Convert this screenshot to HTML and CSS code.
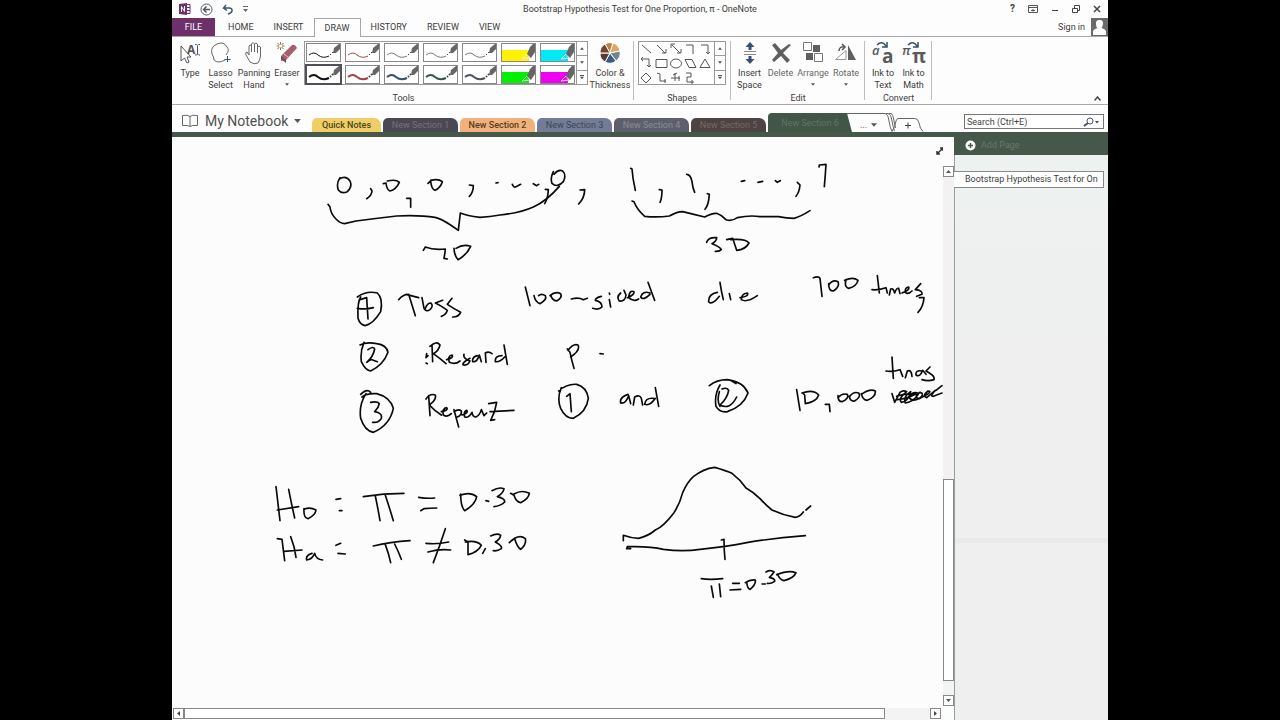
FILE: index.html
```html
<!DOCTYPE html>
<html lang="en">
<head>
<meta charset="utf-8">
<title>Bootstrap Hypothesis Test for One Proportion, π - OneNote</title>
<link rel="stylesheet" href="styles.css">
</head>
<body>
<svg class="defs" aria-hidden="true">
  <symbol id="pen" viewBox="0 0 33 17">
    <path d="M2 11Q7 7 11 11Q16 15 22 12" fill="none" stroke="currentColor"/>
    <path d="M23 11l1-1M25 9l1-1" stroke="#444" fill="none"/>
    <path d="M26 9L27 4L32 0H33V5L29 9Z" fill="#666" stroke="none"/>
  </symbol>
  <symbol id="marker" viewBox="0 0 33 17">
    <path d="M0 6H27V17H0Z" fill="currentColor"/>
    <path d="M20 15L25 10L28 14Z" fill="none" stroke="#eee"/>
    <path d="M25 10L28 3L31 0H33V8L29 14Z" fill="#666"/>
  </symbol>
  <symbol id="up" viewBox="0 0 5 3"><path d="M0 3L2.500 0L5 3Z" fill="#555"/></symbol>
  <symbol id="down" viewBox="0 0 5 3"><path d="M0 0L2.500 3L5 0Z" fill="#555"/></symbol>
</svg>
<div class="app">
  <header class="titlebar">
    <div class="quick">
      <svg width="12" height="12" viewBox="0 0 12 12"><path d="M0 1L8 0V12L0 11Z" fill="#6d3069"/><path d="M8 1.500H11V10.500H8M8 4.500H11M8 7.500H11" fill="none" stroke="#6d3069"/><path d="M2.500 9V3.500L5.500 8.500V3" fill="none" stroke="#fff"/></svg>
      <button aria-label="Back"><svg width="13" height="13" viewBox="0 0 13 13" fill="none" stroke="#4d5a66"><circle cx="6.500" cy="6.500" r="5.500"/><path d="M10 6.500H4M6.500 3.500L3.500 6.500L6.500 9.500" stroke-width="1.500"/></svg></button>
      <button aria-label="Undo"><svg width="12" height="11" viewBox="0 0 12 11" fill="none" stroke="#3f5570" stroke-width="1.500"><path d="M4 1L1.500 4L5 6.500M2 4H7Q10.500 4 10 7Q9.500 9 6 10"/></svg></button>
      <button aria-label="Customize"><svg width="5" height="6" viewBox="0 0 5 6"><path d="M0 .5H5" stroke="#666"/><path d="M0 3H5L2.500 6Z" fill="#666"/></svg></button>
    </div>
    <h1>Bootstrap Hypothesis Test for One Proportion, π - OneNote</h1>
    <div class="winctl">
      <button class="help" aria-label="Help">?</button>
      <button aria-label="Ribbon display"><svg width="10" height="8" viewBox="0 0 10 8" fill="none" stroke="#555"><path d="M.5 .5H9.500V7.500H.5ZM1 2.500H9M5 6.500V4M3 5.500H7"/></svg></button>
      <button aria-label="Minimize"><svg width="8" height="8" viewBox="0 0 8 8"><path d="M1 5.500H7" stroke="#444"/></svg></button>
      <button aria-label="Restore"><svg width="8" height="8" viewBox="0 0 8 8" fill="none" stroke="#444"><path d="M.5 3.500H5.500V7.500H.5ZM2.500 3V.5H7.500V5.500H6"/></svg></button>
      <button aria-label="Close"><svg width="8" height="8" viewBox="0 0 8 8"><path d="M1 1L7 7M7 1L1 7" stroke="#444" stroke-width="1.500"/></svg></button>
    </div>
  </header>

  <nav class="tabs">
    <button class="file">FILE</button>
    <button>HOME</button>
    <button>INSERT</button>
    <button class="active">DRAW</button>
    <button>HISTORY</button>
    <button>REVIEW</button>
    <button>VIEW</button>
    <a class="signin" href="#">Sign in</a>
    <svg width="17" height="18" viewBox="0 0 17 18"><path d="M0 0H17V18H0Z" fill="#6a6a6a"/><path d="M8.500 2Q12.500 2 12 6Q11.500 9 10.500 10Q14 11 15 13V17H2V13Q3 11 6.500 10Q5 9 5 6Q4.500 2 8.500 2Z" fill="#fff"/></svg>
  </nav>

  <div class="ribbon">
    <section class="group">
      <div class="items">
        <button class="tool w30"><svg width="24" height="24" viewBox="0 0 24 24" fill="none" stroke="#555"><path d="M3 5V20L6.500 17L9 22L11 21L9 16H13Z"/><path d="M17 3.500H18.500L19.500 4.500L20.500 3.500H22M19.500 4.500V13L18.500 14H17M19.500 13L20.500 14H22"/><text x="9" y="13" class="glyph">A</text></svg>Type</button>
        <button class="tool w31"><svg width="24" height="24" viewBox="0 0 24 24" fill="none" stroke="#666"><path d="M16 19Q9 23 5 19Q5 16 3 13Q1 6 8 3Q15 0 18 6Q21 9 17 14"/><path d="M18.500 15V21M15.500 18.500H21.500" stroke="#36526e"/></svg>Lasso<br>Select</button>
        <button class="tool w36"><svg width="24" height="24" viewBox="0 0 24 24" fill="none" stroke="#666"><path d="M8 21Q6 17 4 14Q3 11 5 11L7 14V5Q8 3 9.500 5V11V3Q11 0 12.500 3V11V3Q14 1 15.500 3V12V6Q17 4 18.500 6V15Q18 19 16 22Q12 24 8 21Z"/></svg>Panning<br>Hand</button>
        <button class="tool w30"><svg width="24" height="24" viewBox="0 0 24 24"><path d="M6 15L17 4Q20 3 22 7L11 19L6 20Z" fill="#a2606c"/><path d="M6 15L11 19V22L6 18Z" fill="#7b4650"/><path d="M9 13L14 17" stroke="#e6bcc2"/><path d="M5.500 1V9M1.500 5H9.500M2.500 2L8.500 8M8.500 2L2.500 8" stroke="#8c7130"/><circle cx="5.500" cy="5" r="1.500" fill="#fff"/></svg>Eraser<svg class="caret" width="4" height="3"><use href="#down"/></svg></button>
        <div class="gallery">
          <div class="pens">
            <button class="thin c-black" aria-label="Black pen"><svg><use href="#pen"/></svg></button>
            <button class="thin c-red" aria-label="Red pen"><svg><use href="#pen"/></svg></button>
            <button class="thin c-gray" aria-label="Blue pen"><svg><use href="#pen"/></svg></button>
            <button class="thin c-gray" aria-label="Green pen"><svg><use href="#pen"/></svg></button>
            <button class="thin c-gray" aria-label="Gray pen"><svg><use href="#pen"/></svg></button>
            <button class="c-yellow" aria-label="Yellow highlighter"><svg><use href="#marker"/></svg></button>
            <button class="c-cyan" aria-label="Cyan highlighter"><svg><use href="#marker"/></svg></button>
            <button class="thick c-black picked" aria-label="Thick black pen"><svg><use href="#pen"/></svg></button>
            <button class="thick c-red" aria-label="Thick red pen"><svg><use href="#pen"/></svg></button>
            <button class="thick c-blue" aria-label="Thick blue pen"><svg><use href="#pen"/></svg></button>
            <button class="thick c-green" aria-label="Thick green pen"><svg><use href="#pen"/></svg></button>
            <button class="thick c-slate" aria-label="Thick gray pen"><svg><use href="#pen"/></svg></button>
            <button class="c-lime" aria-label="Green highlighter"><svg><use href="#marker"/></svg></button>
            <button class="c-pink" aria-label="Pink highlighter"><svg><use href="#marker"/></svg></button>
          </div>
          <div class="steps">
            <button aria-label="Previous pens"><svg width="4" height="3"><use href="#up"/></svg></button>
            <button aria-label="Next pens"><svg width="4" height="3"><use href="#down"/></svg></button>
            <button class="more" aria-label="More pens"><svg width="4" height="3"><use href="#down"/></svg></button>
          </div>
        </div>
        <button class="tool w44"><svg width="24" height="24" viewBox="-12 -12 24 24" stroke="#fff"><path d="M0 0L-5 -9A10 10 0 0 1 3 -10Z" fill="#b98045"/><path d="M0 0L3 -10A10 10 0 0 1 10 -2Z" fill="#e0a560"/><path d="M0 0L10 -2A10 10 0 0 1 6 8Z" fill="#71868a"/><path d="M0 0L6 8A10 10 0 0 1 -5 9Z" fill="#3d5c86"/><path d="M0 0L-5 9A10 10 0 0 1 -10 0Z" fill="#5b3b3a"/><path d="M0 0L-10 0A10 10 0 0 1 -5 -9Z" fill="#7b4030"/></svg>Color &amp;<br>Thickness</button>
      </div>
      <h2>Tools</h2>
    </section>
    <section class="group">
      <div class="items">
        <div class="gallery">
          <svg class="shapes" width="75" height="42" viewBox="0 0 75 42" fill="none" stroke="#555">
            <path d="M3 3L12 11M18 3L26 11M23 11H27V7M33 3L41 11M32 6V2H36M38 11H42V7M47 3H54V12M62 3H69V12M67 10L69 12L71 10"/>
            <path d="M2 17H10V25M4 15L2 17L4 19M8 23L10 25L12 23M17 17.500H28V25.500H17ZM46 17.500H53L57 25.500H50ZM61 25.500L66 17L71 25.500Z"/><ellipse cx="37" cy="21.500" rx="5.500" ry="4.500"/>
            <path d="M2 36L7 31L12 36L7 41ZM18 31L21 32V39H27M26 37V41M32 36H41M36 31V39M40 34V39M34 33L38 31M47 31H52V35H48V40H55M53 38V42"/>
          </svg>
          <div class="steps">
            <button aria-label="Previous shapes"><svg width="4" height="3"><use href="#up"/></svg></button>
            <button aria-label="Next shapes"><svg width="4" height="3"><use href="#down"/></svg></button>
            <button class="more" aria-label="More shapes"><svg width="4" height="3"><use href="#down"/></svg></button>
          </div>
        </div>
      </div>
      <h2>Shapes</h2>
    </section>
    <section class="group">
      <div class="items">
        <button class="tool w31"><svg width="24" height="24" viewBox="0 0 24 24"><path d="M6 10.500H18M6 13.500H18" stroke="#888"/><path d="M12 1L16.500 6H13.500V9H10.500V6H7.500ZM12 23L16.500 18H13.500V15H10.500V18H7.500Z" fill="#34506e"/></svg>Insert<br>Space</button>
        <button class="tool w31 dim"><svg width="24" height="24" viewBox="0 0 24 24"><path d="M3 4L6 2L12 9L20 3L22 4L14 12L21 19L18 22L12 15L5 21L3 19L9 12Z" fill="#5f5f5f"/></svg>Delete</button>
        <button class="tool w34 dim"><svg width="24" height="24" viewBox="0 0 24 24"><path d="M12 4H19V11H12ZM5 12H12V19H5Z" fill="#5f5f5f"/><path d="M2.500 1.500H10.500V9.500H2.500ZM13.500 12.500H21.500V20.500H13.500Z" fill="#fff" stroke="#777"/></svg>Arrange<svg class="caret" width="4" height="3"><use href="#down"/></svg></button>
        <button class="tool w32 dim"><svg width="24" height="24" viewBox="0 0 24 24"><path d="M14 4L22 19H14Z" fill="#5f5f5f"/><path d="M1.500 18.500H12V9.500Z" fill="#fff" stroke="#999"/><path d="M5 10Q5 5 11 6M8 3L11 6L8 9" fill="none" stroke="#555" stroke-width="1.500"/></svg>Rotate<svg class="caret" width="4" height="3"><use href="#down"/></svg></button>
      </div>
      <h2>Edit</h2>
    </section>
    <section class="group">
      <div class="items">
        <button class="tool w30"><svg width="24" height="24" viewBox="0 0 24 24"><text x="1" y="14" class="glyph-i">a</text><text x="11" y="22" class="glyph-b">a</text><path d="M6 4Q11 -1 15 5M16 1V6H11" fill="none" stroke="#34506e" stroke-width="1.500"/></svg>Ink to<br>Text</button>
        <button class="tool w31"><svg width="24" height="24" viewBox="0 0 24 24"><text x="0" y="14" class="glyph-i">π</text><text x="10" y="22" class="glyph-b">π</text><path d="M6 4Q11 -1 15 5M16 1V6H11" fill="none" stroke="#34506e" stroke-width="1.500"/></svg>Ink to<br>Math</button>
      </div>
      <h2>Convert</h2>
    </section>
    <button class="collapse" aria-label="Collapse the ribbon"><svg width="7" height="5" viewBox="0 0 7 5"><path d="M.5 4.500L3.500 1L6.500 4.500" fill="none" stroke="#444" stroke-width="1.500"/></svg></button>
  </div>

  <div class="sections">
    <button class="notebook"><svg width="18" height="14" viewBox="0 0 18 14" fill="none" stroke="#666"><path d="M9 2.500Q7 .5 1.500 1.500V11.500Q7 11 9 12.500Q11 11 16.500 11.500V1.500Q11 .5 9 2.500V12"/></svg><span>My Notebook</span><svg width="7" height="4"><use href="#down"/></svg></button>
    <div class="strip">
      <button class="s-yellow">Quick Notes</button>
      <button class="s-ink">New Section 1</button>
      <button class="s-orange">New Section 2</button>
      <button class="s-blue">New Section 3</button>
      <button class="s-slate">New Section 4</button>
      <button class="s-brown">New Section 5</button>
      <button class="s-green">New Section 6</button>
    </div>
    <button class="overflow">... <svg width="6" height="4"><use href="#down"/></svg></button>
    <svg class="stack" width="14" height="19" viewBox="0 0 14 19" fill="none" stroke="#666"><path d="M0 .5H1Q4 1 5 8Q6 15 8 18.500M2 .5H4Q7 1 8 8Q9 14 10.500 18M5 .5H7Q9 1 10 8L11.500 15M8 18.500Q11 14 12 8Q13 5.500 14 5.500"/></svg>
    <button class="add" aria-label="New section"><svg width="28" height="14" viewBox="0 0 28 14" fill="none" stroke="#666"><path d="M0 .5H17Q20 .5 21 5Q22 11 25 13.500"/><path d="M7 7.500H13M10 4.500V10.500" stroke="#444"/></svg></button>
    <label class="search"><input type="text" placeholder="Search (Ctrl+E)" aria-label="Search"><svg width="20" height="10" viewBox="0 0 20 10" fill="none" stroke="#456"><circle cx="9" cy="4" r="3"/><path d="M7 6L3 9" stroke-width="2"/><path d="M14 4H18L16 6.500Z" fill="#444" stroke="none"/></svg></label>
  </div>

  <main class="workspace">
    <div class="page">
      <div class="canvas">
        <svg class="ink" width="771" height="570" viewBox="172 137 771 570" role="img" aria-label="Handwritten notes">
          <g transform="translate(320 155) scale(.33333)">
            <path d="M60 68Q48 85 55 105Q65 118 82 110Q98 95 90 78Q78 60 58 72M152 101L156 108Q155 122 140 131M190 86L198 84Q200 104 210 108Q228 104 238 82Q228 72 202 78M260 130L272 130L272 157M324 85L332 78Q334 102 345 106Q362 98 367 80Q355 70 332 76M448 90L460 92Q460 112 448 124M528 84L534 83M577 88Q582 100 588 95L602 88M640 86L650 92L656 88M676 103L685 104Q684 130 674 146M700 50Q690 70 696 85Q712 100 730 80Q740 60 728 48Q715 42 702 58M780 105L794 104Q794 128 776 147"/>
            <path d="M24 148L30 156Q32 176 48 192Q60 205 74 206L108 198Q170 190 230 183Q300 180 345 187Q365 190 415 226L421 174Q440 182 480 187Q510 186 540 180Q600 174 640 156Q680 138 718 94"/>
            <path d="M310 286L316 276Q340 286 376 282Q374 300 372 310L382 312M402 280Q402 300 414 314Q440 300 452 274Q430 266 408 280"/>
          </g>
          <g transform="translate(600 155) scale(.33333)">
            <path d="M92 40L96 42Q98 70 106 106M178 104L186 105Q186 130 180 142M260 58Q272 58 276 80Q278 100 284 112M322 116L328 118Q326 150 315 163M424 79L434 77M474 82L488 79M526 77L532 82L541 77M592 82L600 90Q598 112 588 124M657 36L658 30L678 28Q676 60 673 95"/>
            <path d="M96 138L102 140Q110 162 134 184Q170 188 208 183Q232 170 248 170Q280 178 314 186Q335 174 350 175Q365 180 378 194Q395 200 412 188Q450 180 480 185L535 185Q560 190 582 190Q600 186 630 167"/>
            <path d="M320 262Q325 246 350 248Q350 258 336 266Q362 276 364 284Q358 290 346 289M380 254L398 250L410 286Q436 284 447 264Q436 250 392 254"/>
          </g>
          <g transform="translate(340 265) scale(.33333)">
            <path d="M62 96Q52 110 54 160Q60 180 76 182Q100 176 122 140Q130 100 112 84Q80 76 52 96M60 104L80 98L84 162M52 130Q80 134 100 128M176 104Q188 88 206 88L226 152M198 88Q214 92 236 98M246 98L252 130Q258 142 270 134Q282 122 272 114Q262 114 256 130M308 106L286 114Q300 120 322 136Q318 150 304 154M336 100L322 118Q340 130 362 142Q356 156 338 156"/>
            <path d="M556 66L570 122M582 92Q586 112 600 116Q622 104 616 92Q604 84 596 92M632 90Q636 106 650 108Q668 98 662 86Q646 78 630 92M694 102Q716 96 730 104L742 100M784 94Q766 98 766 106Q786 110 786 126Q776 136 758 130M808 104L812 126M808 84L809 88M842 84Q828 96 838 108Q856 110 858 90L852 76M862 98Q884 90 882 80Q868 74 866 98Q880 112 896 102M930 84Q908 76 902 96Q910 108 930 88M924 52Q934 80 944 106"/>
            <path d="M72 232Q60 260 64 290Q76 316 92 318Q130 300 144 262Q140 240 110 236Q80 230 60 240M84 254Q100 242 104 252Q100 275 80 292Q90 282 96 284L112 290M258 294L262 296M260 266L258 278L264 272M276 240L278 290M270 244Q290 226 300 240Q296 258 280 266Q300 280 318 296M320 284Q342 278 336 270Q322 272 328 292Q346 300 360 288M372 268Q368 280 390 288Q384 302 370 300Q364 294 390 280M412 272Q396 276 398 290Q412 292 418 270L424 290M438 292L436 264Q446 258 456 266M486 272Q464 272 466 290Q480 292 494 276M492 240L502 298M682 252L690 262Q696 290 702 310M684 256Q700 234 714 240Q722 256 692 276M780 266L790 267"/>
            <path d="M78 386Q56 420 62 460Q74 498 100 502Q150 480 160 430Q150 396 110 386Q80 384 66 396M62 388Q80 370 92 382M92 412Q112 408 118 416Q116 428 104 440Q128 444 124 460Q116 474 98 472M266 392L270 452M258 402Q270 384 286 390Q290 404 268 420Q282 436 304 450M304 440Q326 436 320 428Q306 430 310 450Q322 458 334 446M342 434L356 486M342 440Q356 430 364 438Q366 450 352 456M366 450Q386 444 380 436Q370 440 374 456Q386 460 396 442Q398 456 408 456Q420 450 424 434L432 452L440 444M446 416L470 412Q466 440 452 466L464 464M450 440L522 436M664 368Q650 400 662 430Q676 460 700 460Q740 440 745 400Q740 366 710 358Q680 356 656 378M680 394L690 386L694 440M864 388Q838 396 842 414Q858 416 866 392L872 416M880 420L884 396Q900 388 904 400L908 420M940 400Q916 398 914 418Q930 424 946 400M946 368L956 424"/>
          </g>
          <g transform="translate(640 265) scale(.33333)">
            <path d="M232 82Q204 88 206 110Q216 122 238 94M240 52Q244 80 250 104M268 86L272 104M300 98Q328 94 322 84Q304 86 304 104Q320 114 352 92M520 38Q536 32 540 40L546 94M566 56Q566 78 580 78Q600 66 594 50Q578 42 566 60M618 44Q612 66 626 70Q650 64 654 46Q640 34 614 46M712 32L718 84M696 74Q714 76 738 68L742 84M748 90L752 72Q760 68 764 84Q770 68 776 70L780 86M786 84Q810 76 806 66Q794 68 796 82Q804 90 816 78M842 56L826 74Q848 76 846 88L830 94M838 98L852 98Q850 126 834 142"/>
            <path d="M756 276L760 340M738 318Q756 322 780 314L788 334M796 338L802 318Q814 312 816 334M846 318Q826 314 828 330Q840 338 848 316L858 328M870 306L858 318Q886 332 882 344Q864 350 846 344M240 360Q222 390 228 424Q240 444 262 440Q310 424 324 384Q310 350 262 344Q230 344 208 362M272 346L288 356M246 372Q262 366 266 376Q262 400 240 420Q270 436 290 396M238 380Q230 408 240 424M470 374L480 436M488 384L494 390L496 416Q530 410 536 390Q520 372 486 384M556 418L568 418L570 440M594 392Q594 410 606 410Q628 400 622 388Q606 384 594 398M628 394Q630 410 644 408Q664 396 656 384Q640 378 628 396M664 386Q668 406 682 406Q708 396 706 378Q690 370 664 388"/>
            <path d="M756 386L764 412L780 382Q790 374 800 380Q774 400 784 412Q804 410 812 380Q788 396 796 414Q822 410 836 386Q820 376 806 396Q816 412 838 400Q856 386 840 382Q820 394 836 402L862 388Q876 378 864 378Q846 392 860 398L886 376Q868 394 880 394L906 384M770 394Q800 384 826 388Q800 402 772 404M888 376L906 362"/>
          </g>
          <g transform="translate(260 470) scale(.33333)">
            <path d="M48 50Q54 100 60 152M86 58Q94 100 104 144M52 120L116 110M132 116Q130 144 144 146Q166 136 168 120Q150 110 132 118M228 88L242 86M238 122L246 122M310 80Q370 70 432 70M346 78Q354 116 360 152M376 76Q388 112 400 152M476 82Q500 86 524 84M482 122L492 116Q510 114 530 114M602 72Q602 110 614 122Q646 104 650 80Q630 64 600 76M678 92L686 94M696 62Q716 50 732 56Q730 70 712 80Q736 86 734 96Q722 108 702 110M752 70L762 76Q768 96 782 98Q806 86 808 70Q786 58 762 72"/>
            <path d="M52 206L66 208Q70 240 74 272M92 200Q104 230 108 262M72 244L126 240M156 250Q136 256 140 270Q158 268 164 250Q168 268 188 270M228 226L242 220M234 250L256 252M340 228Q390 216 450 212M376 224Q386 250 392 278M404 222Q416 246 424 268M556 176Q540 226 520 278M498 220Q530 224 566 216M504 246Q540 236 572 240M614 210L624 216L624 254Q654 246 664 226Q650 210 616 216M676 236L668 250M692 198Q712 188 722 196Q720 208 706 216Q728 228 724 236Q712 244 700 242M752 214L764 206Q772 232 782 238Q800 224 796 206Q776 190 748 218"/>
          </g>
          <g transform="translate(600 450) scale(.33333)">
            <path d="M70 272L70 256Q90 264 116 265Q145 258 166 240Q190 230 222 188Q240 160 248 128Q262 96 280 80Q310 56 344 52Q380 62 396 70Q420 88 438 114Q460 126 480 146Q500 168 516 180Q550 196 586 202Q600 200 610 186M618 180L632 168M82 290L80 296L92 296M82 290Q150 288 190 298Q250 306 300 298Q380 290 440 278Q520 264 616 257M364 270L372 268Q372 300 375 328"/>
            <path d="M304 386Q330 390 368 386M334 408L340 442M358 402L362 440M398 400L418 400M390 420L422 418M440 396Q442 416 450 418Q468 404 466 390Q450 388 436 398M486 402L496 402M498 366Q512 358 522 366Q514 378 508 382Q526 386 524 394Q512 402 502 400M532 372Q540 390 552 392Q582 384 588 368Q566 360 530 374"/>
          </g>
        </svg>
        <button class="expand" aria-label="Full page view"><svg width="8" height="8" viewBox="0 0 8 8" fill="none" stroke="#333" stroke-width="1.500"><path d="M1 7L7 1M4 1H7V4M1 4V7H4"/></svg></button>
      </div>
      <div class="hscroll">
        <button aria-label="Scroll left"><svg width="3" height="5" viewBox="0 0 3 5"><path d="M3 0V5L0 2.500Z" fill="#444"/></svg></button>
        <div class="hthumb"></div><div class="hrest"></div>
        <button aria-label="Scroll right"><svg width="3" height="5" viewBox="0 0 3 5"><path d="M0 0V5L3 2.500Z" fill="#444"/></svg></button>
      </div>
    </div>
    <div class="vscroll">
      <button aria-label="Scroll up"><svg width="5" height="3"><use href="#up"/></svg></button>
      <div class="vbefore"></div><div class="vthumb"></div><div class="vafter"></div>
      <button aria-label="Scroll down"><svg width="5" height="3"><use href="#down"/></svg></button>
    </div>
    <aside class="pages">
      <button class="addpage"><svg width="11" height="11" viewBox="0 0 11 11"><circle cx="5.500" cy="5.500" r="5" fill="#fff"/><path d="M5.500 3V8M3 5.500H8" stroke="#46584a" stroke-width="1.500"/></svg>Add Page</button>
      <a class="entry" href="#">Bootstrap Hypothesis Test for On</a>
      <div class="fill"></div>
      <div class="band"></div>
      <div class="rest"></div>
    </aside>
  </main>
</div>
</body>
</html>
```
FILE: styles.css
```css
* { box-sizing: border-box; }
body { margin: 0; background: #000; color: #3c3c3c; font: 9px/12px Roboto, "Open Sans", sans-serif; }
button { margin: 0; padding: 0; border: 0; background: none; color: inherit; font: inherit; }
svg { display: block; flex: none; }
h1, h2 { margin: 0; font: inherit; }
a { color: inherit; text-decoration: none; }
.defs { position: absolute; width: 0; height: 0; }

.app { display: flex; flex-direction: column; min-height: 100vh; margin: 0 172px; background: #fdfdfd; overflow: hidden; }

.titlebar { display: grid; grid-template-columns: 1fr auto 1fr; align-items: center; height: 18px; padding: 0 7px; }
.quick { display: flex; align-items: center; gap: 9px; }
.winctl { display: flex; align-items: center; justify-content: flex-end; gap: 13px; }
.help { font-weight: 700; font-size: 10px; }

.tabs { display: flex; height: 19px; border-bottom: 1px solid #a8a8a8; }
.tabs button { padding: 0 10px; }
.tabs .file { width: 43px; margin-right: 3px; background: #6d3069; color: #fff; }
.tabs .active { height: 19px; border: 1px solid #a8a8a8; border-bottom: 0; background: #fdfdfd; }
.signin { margin-left: auto; margin-right: 6px; line-height: 18px; }

.ribbon { display: flex; height: 68px; border-bottom: 1px solid #a8a8a8; }
.group { display: flex; flex-direction: column; padding: 4px 3px 0; background: linear-gradient(#bdbdbd, #bdbdbd) right 4px / 1px 59px no-repeat; }
.group:nth-child(1) { padding-right: 2px; }
.group:nth-child(2) { padding: 4px 5px 0 4px; }
.group h2 { margin-top: auto; text-align: center; }
.items { display: flex; align-items: flex-start; }
.tool { display: flex; flex-direction: column; align-items: center; line-height: 12px; white-space: nowrap; }
.tool svg { margin-bottom: 2px; overflow: visible; }
.tool .caret { margin: 4px 0 0; }
.dim { color: #666; }
.w30 { width: 30px; }
.w31 { width: 31px; }
.w32 { width: 32px; }
.w34 { width: 34px; }
.w36 { width: 36px; }
.w44 { width: 44px; }
.collapse { margin: auto 7px 3px auto; }
.glyph { font: 700 12px "Open Sans", sans-serif; fill: #555; stroke: none; }
.glyph-i { font: italic 600 13px "Open Sans", sans-serif; fill: #5a5a5a; }
.glyph-b { font: 700 19px "Open Sans", sans-serif; fill: #5a5a5a; }

.gallery { display: flex; border: 1px solid #999; height: 44px; background: #fff; }
.tool + .gallery { margin-left: 2px; }
.pens { display: grid; grid-template-columns: repeat(7, 35px); gap: 3px 4px; padding: 1px; }
.pens button { height: 19px; border: 1px solid #888; }
.pens svg { width: 33px; height: 17px; }
.pens .picked { outline: 2px solid #50505a; outline-offset: -1px; }
.thin { stroke-width: 1px; }
.thick { stroke-width: 2px; }
.c-black { color: #111; }
.c-red { color: #a3434c; }
.c-gray { color: #777; }
.c-blue { color: #34506e; }
.c-green { color: #2f5a4c; }
.c-slate { color: #4a5560; }
.c-yellow { color: #fff200; }
.c-cyan { color: #00eaf5; }
.c-lime { color: #00f000; }
.c-pink { color: #f000f0; }
.steps { display: flex; flex-direction: column; width: 11px; border-left: 1px solid #999; }
.steps button { display: flex; flex: 1; align-items: center; justify-content: center; }
.steps button + button { border-top: 1px solid #999; }
.more svg { border-top: 1px solid #555; height: 5px; }

.sections { display: flex; align-items: flex-end; height: 27px; padding-right: 4px; }
.notebook { display: flex; align-items: center; gap: 6px; width: 140px; height: 22px; padding-left: 9px; font-size: 14px; color: #505050; }
.notebook span { white-space: nowrap; }
.strip { display: flex; align-items: flex-end; gap: 2px; }
.strip button { width: 75px; height: 14px; border-radius: 5px 7px 0 0; line-height: 14px; white-space: nowrap; overflow: hidden; }
.strip .s-yellow { width: 69px; background: #efce68; color: #4f4520; font-weight: 500; }
.s-ink { background: #4b4852; color: #77717c; }
.strip .s-orange { background: #f0b17c; color: #5a3c22; font-weight: 500; }
.s-blue { background: #737c96; color: #3c4458; }
.s-slate { background: #5d606c; color: #8a8c96; }
.s-brown { background: #4d4342; color: #766a64; }
.strip .s-green { width: 84px; height: 19px; line-height: 20px; background: #415646; color: #61755f; border-radius: 4px 0 0 0; clip-path: polygon(0 0, 94% 0, 100% 100%, 0 100%); }
.overflow { display: flex; align-items: center; gap: 4px; height: 19px; width: 37px; margin-left: -5px; padding: 4px 0 0 13px; border-top: 1px solid #666; }
.add { height: 14px; }
.search { display: flex; align-items: center; width: 140px; height: 15px; margin: 0 0 3px auto; padding-right: 2px; border: 1px solid #777; background: #fff; }
.search input { flex: 1; min-width: 0; border: 0; padding: 0 2px; background: none; font: inherit; outline: 0; }
.search input::placeholder { color: #444; opacity: 1; }

.workspace { display: grid; grid-template-columns: 1fr 11px 154px; flex: 1; border-top: 5px solid #46584a; }
.page { display: flex; flex-direction: column; min-width: 0; overflow: hidden; background: #fcfcfc; }
.canvas { position: relative; flex: 1; }
.ink { fill: none; stroke: #0a0a0a; stroke-width: 5px; stroke-linecap: round; stroke-linejoin: round; }
.expand { position: absolute; top: 10px; right: -1px; }
.hscroll { display: flex; height: 12px; padding: 0 2px 0 1px; }
.hscroll button, .vscroll button { display: flex; align-items: center; justify-content: center; flex: none; width: 11px; height: 11px; border: 1px solid #888; background: #fff; }
.hthumb { flex: 701; height: 11px; border: 1px solid #888; background: #fff; }
.hrest { flex: 45; background: #f3f3f3; }
.vscroll { display: flex; flex-direction: column; padding: 29px 0 14px; background: #fcfcfc; }
.vbefore { flex: 304; background: #f3f1f2; }
.vthumb { flex: 201; border: 1px solid #888; background: #fff; }
.vafter { flex: 14; background: #f3f3f3; }
.pages { display: flex; flex-direction: column; border-left: 1px solid #8fa39b; background: linear-gradient(#edf2f0, #efefef 40%); }
.addpage { display: flex; align-items: center; gap: 5px; height: 18px; margin-left: -1px; padding: 0 0 2px 11px; background: #46584a; color: #66796a; }
.entry { height: 17px; margin: 16px 4px 0 -1px; padding-left: 11px; border: 1px solid #888; border-left: 0; background: #fff; line-height: 15px; white-space: nowrap; overflow: hidden; }
.fill { flex: 351; }
.band { height: 5px; background: #e9e9e9; }
.rest { flex: 177; }
```
